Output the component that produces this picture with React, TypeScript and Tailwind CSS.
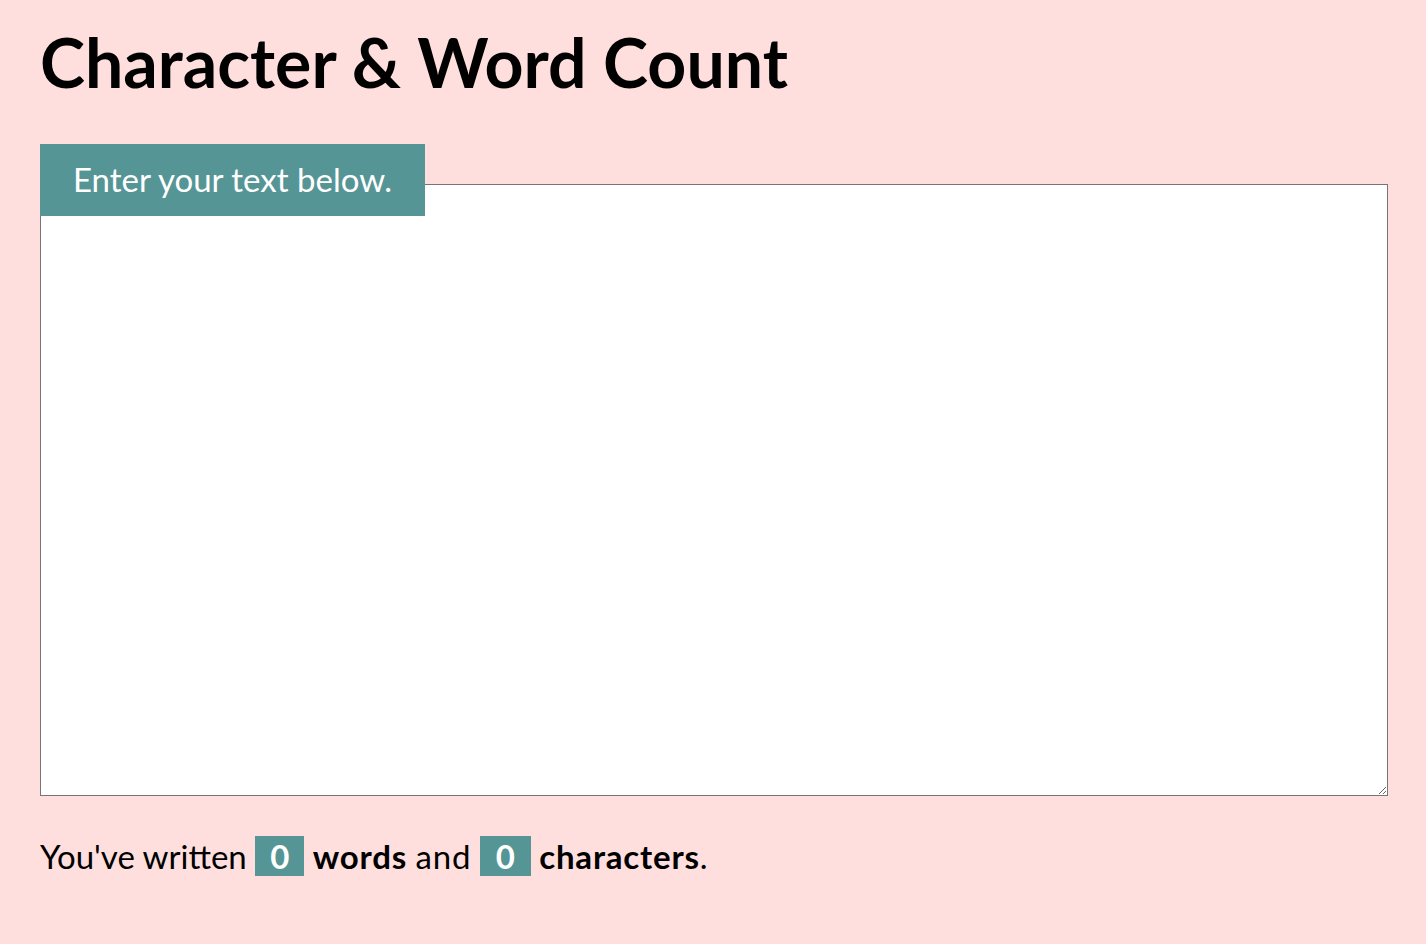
import { useState } from 'react';

export default function App() {
  const [text, setText] = useState('');

  const words = text.trim() ? text.trim().split(/\s+/).length : 0;
  const chars = text.length;

  return (
    <div className="min-h-screen bg-[#ffdfdd] px-10 pt-[22px] pb-10 text-black font-['Lato','Open_Sans',sans-serif]">
      <h1 className="text-[68px] font-bold leading-[80px]">Character &amp; Word Count</h1>

      <div className="mt-[42px]">
        <label
          htmlFor="text-input"
          className="relative z-10 flex h-[72px] w-fit items-center bg-[#569595] px-[33px] text-[33px] text-white"
        >
          Enter your text below.
        </label>
        <textarea
          id="text-input"
          value={text}
          onChange={(e) => setText(e.target.value)}
          className="-mt-8 block h-[612px] w-[1348px] resize border border-[#767676] bg-white p-2 text-[20px] outline-none"
        />
      </div>

      <p className="mt-10 text-[33px] leading-[40px]">
        You've written{' '}
        <span className="inline-block bg-[#569595] px-[15px] font-bold text-white">{words}</span>{' '}
        <strong className="font-bold tracking-[0.8px]">words</strong> <span className="tracking-[0.8px]">and</span>{' '}
        <span className="inline-block bg-[#569595] px-[16px] font-bold text-white">{chars}</span>{' '}
        <strong className="font-bold tracking-[0.8px]">characters</strong>.
      </p>
    </div>
  );
}
